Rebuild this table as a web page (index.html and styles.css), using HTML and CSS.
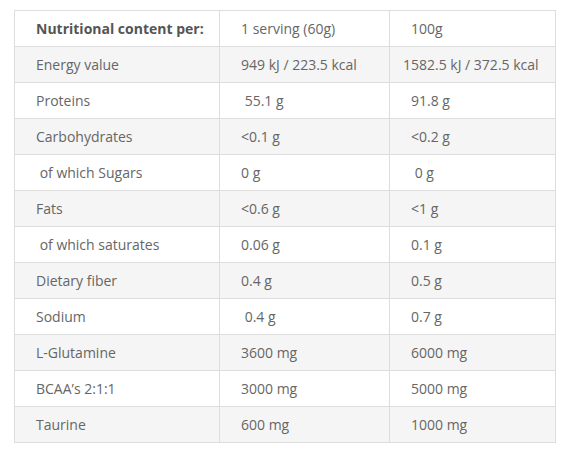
FILE: index.html
```html
<!DOCTYPE html>
<html lang="en">
<head>
    <meta charset="UTF-8">
    <meta name="viewport" content="width=device-width, initial-scale=1.0">
    <title>Nutritional content</title>
    <link rel="stylesheet" href="styles.css">
</head>
<body>
    <!-- Tableau des valeurs nutritionnelles -->
    <table class="nutrition">
        <colgroup>
            <col class="col-name">
            <col class="col-serving">
            <col class="col-hundred">
        </colgroup>
        <tr class="head">
            <td>Nutritional content per:</td>
            <td>1 serving (60g)</td>
            <td>100g</td>
        </tr>
        <tr>
            <td>Energy value</td>
            <td>949 kJ / 223.5 kcal</td>
            <td class="tight">1582.5 kJ / 372.5 kcal</td>
        </tr>
        <tr>
            <td>Proteins</td>
            <td>&nbsp;55.1 g</td>
            <td>91.8 g</td>
        </tr>
        <tr>
            <td>Carbohydrates</td>
            <td>&lt;0.1 g</td>
            <td>&lt;0.2 g</td>
        </tr>
        <tr>
            <td>&nbsp;of which Sugars</td>
            <td>0 g</td>
            <td>&nbsp;0 g</td>
        </tr>
        <tr>
            <td>Fats</td>
            <td>&lt;0.6 g</td>
            <td>&lt;1 g</td>
        </tr>
        <tr>
            <td>&nbsp;of which saturates</td>
            <td>0.06 g</td>
            <td>0.1 g</td>
        </tr>
        <tr>
            <td>Dietary fiber</td>
            <td>0.4 g</td>
            <td>0.5 g</td>
        </tr>
        <tr>
            <td>Sodium</td>
            <td>&nbsp;0.4 g</td>
            <td>0.7 g</td>
        </tr>
        <tr>
            <td>L-Glutamine</td>
            <td>3600 mg</td>
            <td>6000 mg</td>
        </tr>
        <tr>
            <td>BCAA’s 2:1:1</td>
            <td>3000 mg</td>
            <td>5000 mg</td>
        </tr>
        <tr>
            <td>Taurine</td>
            <td>600 mg</td>
            <td>1000 mg</td>
        </tr>
    </table>
</body>
</html>
```

FILE: styles.css
```css
body {
    margin: 0;
    padding: 10px 8px 0 14px;
    background: #fff;
    font-family: "Open Sans", Arial, sans-serif;
    font-size: 14px;
    color: #666;
}
.nutrition {
    width: 542px;
    border-collapse: collapse;
    table-layout: fixed;
}
.col-name {
    width: 205px;
}
.col-serving {
    width: 170px;
}
.nutrition td {
    height: 36px;
    padding: 0 0 0 21px;
    border: 1px solid #ddd;
    white-space: nowrap;
    box-sizing: border-box;
}
.nutrition tr:nth-child(even) td {
    background-color: #f5f5f5;
}
.nutrition tr.head td:first-child {
    font-weight: bold;
    color: #555;
}
.nutrition td.tight {
    padding-left: 13px;
}
```
